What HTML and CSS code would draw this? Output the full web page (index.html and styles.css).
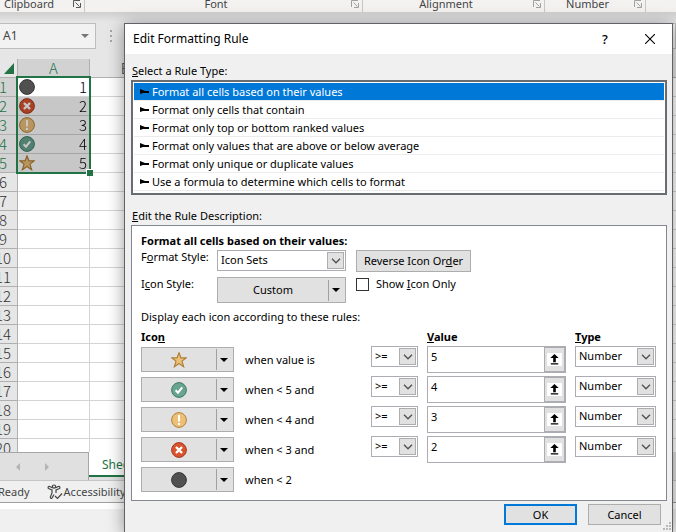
FILE: index.html
```
<!DOCTYPE html>
<html lang="en">
<head>
    <meta charset="UTF-8">
    <meta name="viewport" content="width=device-width, initial-scale=1.0">
    <title>Edit Formatting Rule</title>
    <link rel="stylesheet" href="styles.css">
</head>
<body>
    <!-- Shared icons -->
    <svg class="sprite" aria-hidden="true">
        <symbol id="star" viewBox="0 0 16 16">
            <path d="M8 .8l1.900 5h5.300l-4.200 3.300 1.600 5.600L8 11.400l-4.600 3.300L5 9.100.8 5.800h5.300z" fill="#edc07a" stroke="#b08238" stroke-width="1.200"/>
        </symbol>
        <symbol id="check" viewBox="0 0 16 16">
            <circle cx="8" cy="8" r="7.4" fill="#68a490" stroke="#3c7a66"/>
            <path d="M4.6 8.2l2.4 2.5 4.2-5.4" fill="none" stroke="#fff" stroke-width="2"/>
        </symbol>
        <symbol id="warn" viewBox="0 0 16 16">
            <circle cx="8" cy="8" r="7.4" fill="#edc07a" stroke="#b08238"/>
            <path d="M8 3v6.4M8 11v2" fill="none" stroke="#fff" stroke-width="2"/>
        </symbol>
        <symbol id="cross" viewBox="0 0 16 16">
            <circle cx="8" cy="8" r="7.4" fill="#d9532f" stroke="#a63a20"/>
            <path d="M5 5l6 6M11 5l-6 6" fill="none" stroke="#fff" stroke-width="2.4"/>
        </symbol>
        <symbol id="dot" viewBox="0 0 16 16">
            <circle cx="8" cy="8" r="7.4" fill="#505050" stroke="#353535"/>
        </symbol>
        <symbol id="launcher" viewBox="0 0 10 10">
            <path d="M1.5 8V1.5H8M3.5 3.5l4 4M8.5 4v4.5H4" fill="none" stroke="currentColor"/>
        </symbol>
        <symbol id="chevron" viewBox="0 0 10 6">
            <path d="M1 .8l4 4 4-4" fill="none" stroke="#505050" stroke-width="1.3"/>
        </symbol>
        <symbol id="caret" viewBox="0 0 8 4">
            <path d="M0 0h8L4 4z" fill="currentColor"/>
        </symbol>
        <symbol id="bullet" viewBox="0 0 9 6">
            <path d="M0 0l5 2h4v2H3L0 5z" fill="currentColor"/>
        </symbol>
        <symbol id="pick" viewBox="0 0 16 14">
            <path d="M0 0h16v14H0z" fill="#fff"/>
            <path d="M8 1l4.5 4.5H9.4V10H6.6V5.5H3.5zM4 11h8v1.4H4z" fill="#000"/>
        </symbol>
    </svg>

    <div class="workbook">
        <div class="ribbon">
            <div class="group clipboard"><span>Clipboard</span><svg><use href="#launcher"/></svg></div>
            <div class="group font"><span>Font</span><svg><use href="#launcher"/></svg></div>
            <div class="group alignment"><span>Alignment</span><svg><use href="#launcher"/></svg></div>
            <div class="group number"><span>Number</span><svg><use href="#launcher"/></svg></div>
        </div>

        <div class="formula-bar">
            <div class="name-box"><span>A1</span><svg><use href="#caret"/></svg></div>
            <div class="dots"><i></i><i></i><i></i></div>
            <div class="formula"></div>
        </div>

        <div class="sheet">
            <table class="grid">
                <thead>
                    <tr>
                        <th class="corner"><svg viewBox="0 0 10 11"><path d="M10 0v11H0z" fill="#217346"/></svg></th>
                        <th class="picked">A</th><th>B</th><th>C</th><th>D</th><th>E</th><th>F</th><th>G</th><th>H</th><th class="rest"></th>
                    </tr>
                </thead>
                <tbody>
                    <tr><th class="picked">1</th><td class="value"><div><svg><use href="#dot"/></svg>1</div></td><td></td><td></td><td></td><td></td><td></td><td></td><td></td><td></td></tr>
                    <tr><th class="picked">2</th><td class="value shaded"><div><svg><use href="#cross"/></svg>2</div></td><td></td><td></td><td></td><td></td><td></td><td></td><td></td><td></td></tr>
                    <tr><th class="picked">3</th><td class="value shaded"><div><svg><use href="#warn"/></svg>3</div></td><td></td><td></td><td></td><td></td><td></td><td></td><td></td><td></td></tr>
                    <tr><th class="picked">4</th><td class="value shaded"><div><svg><use href="#check"/></svg>4</div></td><td></td><td></td><td></td><td></td><td></td><td></td><td></td><td></td></tr>
                    <tr><th class="picked">5</th><td class="value shaded"><div><svg><use href="#star"/></svg>5</div></td><td></td><td></td><td></td><td></td><td></td><td></td><td></td><td></td></tr>
                    <tr><th>6</th><td></td><td></td><td></td><td></td><td></td><td></td><td></td><td></td><td></td></tr>
                    <tr><th>7</th><td></td><td></td><td></td><td></td><td></td><td></td><td></td><td></td><td></td></tr>
                    <tr><th>8</th><td></td><td></td><td></td><td></td><td></td><td></td><td></td><td></td><td></td></tr>
                    <tr><th>9</th><td></td><td></td><td></td><td></td><td></td><td></td><td></td><td></td><td></td></tr>
                    <tr><th>10</th><td></td><td></td><td></td><td></td><td></td><td></td><td></td><td></td><td></td></tr>
                    <tr><th>11</th><td></td><td></td><td></td><td></td><td></td><td></td><td></td><td></td><td></td></tr>
                    <tr><th>12</th><td></td><td></td><td></td><td></td><td></td><td></td><td></td><td></td><td></td></tr>
                    <tr><th>13</th><td></td><td></td><td></td><td></td><td></td><td></td><td></td><td></td><td></td></tr>
                    <tr><th>14</th><td></td><td></td><td></td><td></td><td></td><td></td><td></td><td></td><td></td></tr>
                    <tr><th>15</th><td></td><td></td><td></td><td></td><td></td><td></td><td></td><td></td><td></td></tr>
                    <tr><th>16</th><td></td><td></td><td></td><td></td><td></td><td></td><td></td><td></td><td></td></tr>
                    <tr><th>17</th><td></td><td></td><td></td><td></td><td></td><td></td><td></td><td></td><td></td></tr>
                    <tr><th>18</th><td></td><td></td><td></td><td></td><td></td><td></td><td></td><td></td><td></td></tr>
                    <tr><th>19</th><td></td><td></td><td></td><td></td><td></td><td></td><td></td><td></td><td></td></tr>
                    <tr><th>20</th><td></td><td></td><td></td><td></td><td></td><td></td><td></td><td></td><td></td></tr>
                </tbody>
            </table>
            <div class="selection"></div>
        </div>

        <div class="tabs">
            <div class="tab-nav">
                <svg viewBox="0 0 4 8"><path d="M4 0v8L0 4z" fill="#b4b4b4"/></svg>
                <svg viewBox="0 0 4 8"><path d="M0 0v8l4-4z" fill="#b4b4b4"/></svg>
            </div>
            <div class="tab">Sheet1</div>
        </div>

        <div class="status">
            <span>Ready</span>
            <svg viewBox="0 0 16 16"><g fill="none" stroke="#444" stroke-width="1.2"><circle cx="7" cy="2.6" r="1.6"/><path d="M5.4 3.6L2.6 2.5C1 2 .4 4.2 2 4.8L5 6v3l-1.6 4c-.4 1.4 1.2 2 1.8.8L7 10.5M8.6 3.6l2.8-1.1c1.6-.5 2.2 1.7.6 2.3L9 6v3"/><path d="M8 12l2.5 2.5L15 9.5"/></g></svg>
            <span>Accessibility: Good to go</span>
        </div>
    </div>

    <form class="dialog" role="dialog" aria-labelledby="dialog-title">
        <div class="title-bar">
            <h1 id="dialog-title">Edit Formatting Rule</h1>
            <button type="button" class="help" aria-label="Help">?</button>
            <button type="button" class="close" aria-label="Close"><svg viewBox="0 0 10 10"><path d="M0 0l10 10M10 0L0 10" stroke="#000" stroke-width="1.1"/></svg></button>
        </div>

        <div class="content">
            <p class="section-label" id="type-label"><u>S</u>elect a Rule Type:</p>
            <ul class="rule-types" role="listbox" aria-labelledby="type-label">
                <li class="active" role="option" aria-selected="true"><svg><use href="#bullet"/></svg>Format all cells based on their values</li>
                <li role="option"><svg><use href="#bullet"/></svg>Format only cells that contain</li>
                <li role="option"><svg><use href="#bullet"/></svg>Format only top or bottom ranked values</li>
                <li role="option"><svg><use href="#bullet"/></svg>Format only values that are above or below average</li>
                <li role="option"><svg><use href="#bullet"/></svg>Format only unique or duplicate values</li>
                <li role="option"><svg><use href="#bullet"/></svg>Use a formula to determine which cells to format</li>
            </ul>

            <p class="section-label description-label"><u>E</u>dit the Rule Description:</p>
            <div class="description">
                <h2>Format all cells based on their values:</h2>
                <div class="options">
                    <label for="format-style">F<u>o</u>rmat Style:</label>
                    <div class="combo">
                        <select id="format-style"><option>Icon Sets</option><option>Data Bar</option></select>
                        <span class="arrow"><svg><use href="#chevron"/></svg></span>
                    </div>
                    <button type="button" class="button">Reverse Icon Or<u>d</u>er</button>
                    <label for="icon-style">I<u>c</u>on Style:</label>
                    <button type="button" class="split" id="icon-style"><span>Custom</span><i><svg><use href="#caret"/></svg></i></button>
                    <label class="check"><input type="checkbox"><span>Show <u>I</u>con Only</span></label>
                </div>

                <p class="rules-label">Display each icon according to these rules:</p>
                <div class="rules headings">
                    <label for="icon-1">Ico<u>n</u></label>
                    <label class="value-head" for="value-1"><u>V</u>alue</label>
                    <label for="type-1"><u>T</u>ype</label>
                </div>
                <div class="rules">
                    <button type="button" class="split" id="icon-1" aria-label="Star"><span><svg><use href="#star"/></svg></span><i><svg><use href="#caret"/></svg></i></button>
                    <span class="when">when value is</span>
                    <div class="combo"><select aria-label="Operator 1"><option>&gt;=</option><option>&gt;</option></select><span class="arrow"><svg><use href="#chevron"/></svg></span></div>
                    <div class="ref"><input type="text" id="value-1" value="5"><button type="button" aria-label="Pick cell"><svg><use href="#pick"/></svg></button></div>
                    <div class="combo"><select id="type-1"><option>Number</option><option>Percent</option></select><span class="arrow"><svg><use href="#chevron"/></svg></span></div>
                </div>
                <div class="rules">
                    <button type="button" class="split" aria-label="Check mark"><span><svg><use href="#check"/></svg></span><i><svg><use href="#caret"/></svg></i></button>
                    <span class="when">when &lt; 5 and</span>
                    <div class="combo"><select aria-label="Operator 2"><option>&gt;=</option><option>&gt;</option></select><span class="arrow"><svg><use href="#chevron"/></svg></span></div>
                    <div class="ref"><input type="text" aria-label="Value 2" value="4"><button type="button" aria-label="Pick cell"><svg><use href="#pick"/></svg></button></div>
                    <div class="combo"><select aria-label="Type 2"><option>Number</option><option>Percent</option></select><span class="arrow"><svg><use href="#chevron"/></svg></span></div>
                </div>
                <div class="rules">
                    <button type="button" class="split" aria-label="Exclamation mark"><span><svg><use href="#warn"/></svg></span><i><svg><use href="#caret"/></svg></i></button>
                    <span class="when">when &lt; 4 and</span>
                    <div class="combo"><select aria-label="Operator 3"><option>&gt;=</option><option>&gt;</option></select><span class="arrow"><svg><use href="#chevron"/></svg></span></div>
                    <div class="ref"><input type="text" aria-label="Value 3" value="3"><button type="button" aria-label="Pick cell"><svg><use href="#pick"/></svg></button></div>
                    <div class="combo"><select aria-label="Type 3"><option>Number</option><option>Percent</option></select><span class="arrow"><svg><use href="#chevron"/></svg></span></div>
                </div>
                <div class="rules">
                    <button type="button" class="split" aria-label="Cross"><span><svg><use href="#cross"/></svg></span><i><svg><use href="#caret"/></svg></i></button>
                    <span class="when">when &lt; 3 and</span>
                    <div class="combo"><select aria-label="Operator 4"><option>&gt;=</option><option>&gt;</option></select><span class="arrow"><svg><use href="#chevron"/></svg></span></div>
                    <div class="ref"><input type="text" aria-label="Value 4" value="2"><button type="button" aria-label="Pick cell"><svg><use href="#pick"/></svg></button></div>
                    <div class="combo"><select aria-label="Type 4"><option>Number</option><option>Percent</option></select><span class="arrow"><svg><use href="#chevron"/></svg></span></div>
                </div>
                <div class="rules">
                    <button type="button" class="split" aria-label="Black circle"><span><svg><use href="#dot"/></svg></span><i><svg><use href="#caret"/></svg></i></button>
                    <span class="when">when &lt; 2</span>
                </div>
            </div>

            <div class="actions">
                <button type="submit" class="button ok">OK</button>
                <button type="button" class="button">Cancel</button>
            </div>
        </div>
        <svg class="grip" viewBox="0 0 8 8"><path d="M6 0h2v2H6zM3 3h2v2H3zM6 3h2v2H6zM0 6h2v2H0zM3 6h2v2H3zM6 6h2v2H6z" fill="#b8b8b8"/></svg>
    </form>
</body>
</html>
```
FILE: styles.css
```
* {
    box-sizing: border-box;
}

body {
    margin: 0;
    height: 100vh;
    overflow: hidden;
    position: relative;
    background-color: #f0f0f0;
    font-family: "Noto Sans", sans-serif;
    font-size: 11px;
    line-height: 16px;
    color: #000;
}

h1, h2, p, ul {
    margin: 0;
    padding: 0;
    font-size: inherit;
}

button, input, select {
    font: inherit;
    color: inherit;
    margin: 0;
    padding: 0;
}

svg {
    display: block;
    flex: none;
}

.sprite {
    position: absolute;
    width: 0;
    height: 0;
}

/* Workbook behind the dialog, scrolled slightly to the left */
.workbook {
    margin-left: -11px;
    background-color: #e6e6e6;
    border-bottom: 6px solid #fff;
}

.ribbon {
    display: flex;
    align-items: flex-end;
    height: 12px;
    background-color: #f3f2f1;
    color: #444;
    overflow: hidden;
}

.group {
    display: flex;
    align-items: center;
    border-right: 1px solid #c6c6c6;
}

.group span {
    flex: 1;
    padding-right: 3px;
    text-align: center;
}

.group svg {
    width: 10px;
    height: 10px;
    margin-right: 2px;
    color: #a0a0a0;
}

.clipboard {
    width: 96px;
}

.clipboard svg {
    color: #555;
}

.font {
    width: 278px;
}

.alignment {
    width: 182px;
}

.number {
    width: 101px;
}

.formula-bar {
    display: flex;
    align-items: flex-start;
    padding: 11px 0 10px;
    background: linear-gradient(#cfcfcf, #e6e6e6 10px);
}

.name-box {
    display: flex;
    align-items: center;
    justify-content: space-between;
    width: 107px;
    height: 26px;
    padding: 0 6px 0 13px;
    border: 1px solid #bdbdbd;
    background-color: #f2f2f2;
    color: #444;
    font-size: 12px;
}

.name-box svg {
    width: 8px;
    height: 4px;
    color: #777;
}

.dots {
    display: grid;
    gap: 3px;
    padding: 7px 14px;
}

.dots i {
    width: 2px;
    height: 2px;
    background-color: #a6a6a6;
}

.formula {
    flex: 1;
    height: 26px;
    border: 1px solid #bdbdbd;
    background-color: #f2f2f2;
}

.sheet {
    position: relative;
    height: 393px;
    overflow: hidden;
}

.grid {
    width: 100%;
    min-width: 700px;
    table-layout: fixed;
    border-collapse: separate;
    border-spacing: 0;
    background-color: #fff;
    font-family: "Noto Sans CJK SC", sans-serif;
    font-size: 15px;
    line-height: 18px;
}

.grid th {
    width: 72px;
    height: 19px;
    padding: 0;
    border-right: 1px solid #b0b0b0;
    border-bottom: 1px solid #b0b0b0;
    background-color: #e6e6e6;
    color: #333;
    font-weight: 300;
}

.grid .corner {
    width: 29px;
}

.corner svg {
    width: 10px;
    height: 11px;
    margin-left: 15px;
}

.grid .rest {
    width: auto;
}

.grid .picked {
    background-color: #d2d2d2;
    color: #217346;
}

.grid td {
    height: 19px;
    padding: 0;
    border-right: 1px solid #d4d4d4;
    border-bottom: 1px solid #d4d4d4;
    background-color: #fff;
    font-weight: 300;
}

.value div {
    display: flex;
    align-items: center;
    justify-content: space-between;
    padding: 0 2px 0 1px;
}

.value svg {
    width: 16px;
    height: 16px;
}

.grid .shaded {
    filter: brightness(0.78);
}

.selection {
    position: absolute;
    left: 27px;
    top: 17px;
    width: 75px;
    height: 98px;
    border: 2px solid #217346;
}

.selection::after {
    content: "";
    position: absolute;
    right: -4px;
    bottom: -4px;
    width: 6px;
    height: 6px;
    border: 1px solid #fff;
    border-width: 1px 0 0 1px;
    background-color: #217346;
}

.tabs {
    display: flex;
    height: 29px;
    background-color: #e0e0e0;
    border-bottom: 1px solid #c6c6c6;
}

.tab-nav {
    display: flex;
    align-items: center;
    gap: 25px;
    width: 100px;
    padding-left: 27px;
    border-top: 1px solid #a6a6a6;
    border-right: 1px solid #a6a6a6;
}

.tab-nav svg {
    width: 4px;
    height: 8px;
}

.tab {
    height: 25px;
    padding: 5px 13px 0;
    border-bottom: 2px solid #217346;
    background-color: #fff;
    color: #217346;
    font-size: 12px;
}

.status {
    display: flex;
    align-items: center;
    height: 22px;
    padding-left: 9px;
    border-bottom: 1px solid #a0a0a0;
    background-color: #f0f0f0;
    color: #444;
}

.status svg {
    width: 16px;
    height: 16px;
    margin: 0 1px 0 17px;
}

/* Dialog */
.dialog {
    position: absolute;
    top: 23px;
    left: 124px;
    right: 3px;
    border: 1px solid #5f6367;
    background-color: #f0f0f0;
    box-shadow: 0 2px 16px rgba(0, 0, 0, 0.4);
}

.title-bar {
    display: flex;
    align-items: center;
    height: 30px;
    padding: 0 7px 0 8px;
    background-color: #fff;
}

.title-bar h1 {
    flex: 1;
    font-size: 12px;
    font-weight: normal;
}

.title-bar button {
    display: flex;
    align-items: center;
    justify-content: center;
    width: 30px;
    height: 28px;
    border: 0;
    background: none;
}

.help {
    font-size: 13px;
    font-weight: 500;
}

.title-bar .close {
    margin-left: 15px;
}

.close svg {
    width: 10px;
    height: 10px;
}

.content {
    padding: 9px 5px 7px 6px;
}

.section-label {
    padding-left: 1px;
}

.rule-types {
    height: 115px;
    margin-top: 1px;
    padding: 1px;
    border: 2px solid #696d72;
    background-color: #fff;
    list-style: none;
}

.rule-types li {
    display: flex;
    align-items: center;
    gap: 3px;
    height: 18px;
    padding: 1px 0 0 6px;
    border-bottom: 1px solid #ececec;
}

.rule-types svg {
    width: 9px;
    height: 6px;
}

.rule-types .active {
    background-color: #0078d7;
    color: #fff;
}

.rule-types .active svg {
    color: #000;
}

.description-label {
    margin-top: 13px;
}

.description {
    height: 276px;
    margin-top: 1px;
    padding: 7px 10px 0 9px;
    border: 1px solid #828790;
    background-color: #fff;
}

.description h2 {
    font-weight: bold;
}

.options {
    display: grid;
    grid-template-columns: 66px 129px 115px;
    column-gap: 10px;
    row-gap: 5px;
    margin-top: 1px;
    line-height: 14px;
    white-space: nowrap;
}

.options .split {
    height: 26px;
}

.button {
    height: 22px;
    border: 1px solid #adadad;
    background-color: #e1e1e1;
}

.check {
    display: flex;
    align-items: center;
    gap: 7px;
    height: 14px;
}

.check input {
    appearance: none;
    width: 13px;
    height: 13px;
    border: 1px solid #333;
    background-color: #fff;
}

.combo {
    position: relative;
    height: 21px;
}

.combo select {
    appearance: none;
    width: 100%;
    height: 21px;
    padding: 0 0 1px 3px;
    border: 1px solid #abadb3;
    border-radius: 0;
    background-color: #fff;
}

.arrow {
    position: absolute;
    top: 2px;
    right: 2px;
    display: flex;
    align-items: center;
    justify-content: center;
    width: 17px;
    height: 17px;
    border: 1px solid #adadad;
    background-color: #e1e1e1;
    pointer-events: none;
}

.arrow svg {
    width: 10px;
    height: 6px;
}

.split {
    display: flex;
    align-items: center;
    height: 25px;
    border: 1px solid #adadad;
    background-color: #e1e1e1;
}

.split span {
    flex: 1;
    display: flex;
    justify-content: center;
}

.split span svg {
    width: 16px;
    height: 16px;
}

.split i {
    display: flex;
    align-items: center;
    width: 17px;
    height: 21px;
    padding-left: 3px;
    border-left: 1px solid #a0a0a0;
}

.split i svg {
    width: 8px;
    height: 4px;
}

.rules-label {
    margin-top: 6px;
}

.rules {
    display: grid;
    grid-template-columns: 93px 1fr 47px 139px 81px;
    column-gap: 9px;
    align-items: start;
    height: 30px;
}

.rules .split {
    margin-top: 1px;
}

.headings {
    height: 17px;
    margin-top: 4px;
    font-weight: bold;
}

.value-head {
    grid-column: 4;
}

.when {
    padding: 6px 0 0 2px;
}

.ref {
    display: flex;
    height: 27px;
    border: 1px solid #abadb3;
}

.ref input {
    flex: 1;
    min-width: 0;
    padding: 0 0 5px 3px;
    border: 0;
    background-color: #fff;
}

.ref button {
    display: flex;
    align-items: center;
    justify-content: center;
    width: 21px;
    border: 1px solid #abadb3;
    background-color: #e1e1e1;
}

.ref svg {
    width: 15px;
    height: 13px;
}

.actions {
    display: flex;
    justify-content: flex-end;
    gap: 11px;
    padding: 3px 6px 0 0;
}

.actions .button {
    width: 73px;
    height: 21px;
}

.actions .ok {
    border: 2px solid #0078d7;
}

.grip {
    position: absolute;
    right: 1px;
    bottom: 2px;
    width: 8px;
    height: 8px;
}
```
